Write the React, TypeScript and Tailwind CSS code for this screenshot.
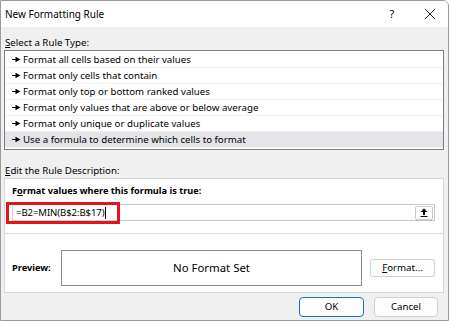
import React from "react";

const rules = [
  "Format all cells based on their values",
  "Format only cells that contain",
  "Format only top or bottom ranked values",
  "Format only values that are above or below average",
  "Format only unique or duplicate values",
  "Use a formula to determine which cells to format",
];

const Pointer = () => (
  <svg width="9" height="7" viewBox="0 0 9 7" className="shrink-0">
    <path d="M0 3.5h4" stroke="#000" strokeWidth="1.2" />
    <path d="M3.5 0.8L8.5 3.5L3.5 6.2Z" fill="#000" />
  </svg>
);

export default function App() {
  return (
    <div className="w-[450px] h-[321px] bg-white" style={{ fontFamily: '"Noto Sans", "Open Sans", sans-serif' }}>
      <div className="w-[449px] h-[321px] flex flex-col bg-[#f0f0f0] border border-[#9a9a9a] rounded-tr-[6px] text-[9.7px] text-black leading-[14px] overflow-hidden">
        {/* Title bar */}
        <div className="h-[26px] shrink-0 bg-white flex items-center pl-[4px] text-[10px]">
          <span className="flex-1">New Formatting Rule</span>
          <span className="w-[20px] text-center text-[11px] mr-[22px]">?</span>
          <svg width="12" height="12" viewBox="0 0 12 12" className="mr-[12px]">
            <path d="M1 1L11 11M11 1L1 11" stroke="#222" strokeWidth="1" />
          </svg>
        </div>

        <div className="flex flex-col px-[3px] pt-[9px]">
          <div className="pl-[1px]">
            <span className="underline">S</span>elect a Rule Type:
          </div>
          <div className="w-[440px] h-[100px] bg-white border border-[#7d7d7d] py-[1px]">
            {rules.map((r, i) => (
              <div
                key={r}
                className={`h-[16px] flex items-center gap-[2px] pl-[7px] border-b border-[#f2f2f2] ${i === 5 ? "bg-[#e4e4e8]" : ""}`}
              >
                <Pointer />
                <span>{r}</span>
              </div>
            ))}
          </div>

          <div className="mt-[14px] pl-[1px]">
            <span className="underline">E</span>dit the Rule Description:
          </div>
          <div className="w-[440px] h-[115px] bg-white border border-[#d5d5d5] flex flex-col">
            <div className="relative flex flex-col px-[7px] pt-[5px] pb-[12px] border-b border-[#dcdcdc]">
              <div className="font-bold text-[9.2px]">
                F<span className="underline">o</span>rmat values where this formula is true:
              </div>
              <div className="mt-[6px] w-[423px] h-[17px] border border-[#c8c8c8] flex items-center justify-between">
                <span className="pl-[3px] text-[9.6px] tracking-[-0.1px]">
                  =B2=MIN(B$2:B$17)<span className="inline-block w-[1px] h-[12px] bg-black align-middle ml-[1px]" />
                </span>
                <div className="w-[18px] h-[14px] mr-[1px] border border-[#c8c8c8] rounded-[2px] flex items-center justify-center bg-white">
                  <svg width="8" height="9" viewBox="0 0 8 9">
                    <path d="M4 0.5L7.5 4H5V7H3V4H0.5Z" fill="#000" />
                    <path d="M0.5 8.5H7.5" stroke="#000" strokeWidth="1" />
                  </svg>
                </div>
              </div>
              <div className="absolute left-[1px] top-[23px] w-[114px] h-[22px] border-[3px] border-[#e3151c]" />
            </div>
            <div className="flex items-center px-[7px] pt-[16px]">
              <span className="font-bold text-[9.2px] w-[49px]">Preview:</span>
              <div className="w-[301px] h-[36px] border border-[#8e8e8e] flex items-center justify-center text-[11.4px]">
                No Format Set
              </div>
              <div className="ml-[8px] w-[65px] h-[18px] border border-[#d0d0d0] rounded-[3px] bg-[#fdfdfd] flex items-center justify-center">
                <span><span className="underline">F</span>ormat...</span>
              </div>
            </div>
          </div>

          <div className="flex justify-end gap-[10px] mt-[4px] pr-[7px]">
            <div className="w-[65px] h-[20px] border border-[#1f6fc0] rounded-[4px] bg-[#fdfdfd] flex items-center justify-center">
              OK
            </div>
            <div className="w-[64px] h-[20px] border border-[#d0d0d0] rounded-[4px] bg-[#fdfdfd] flex items-center justify-center">
              Cancel
            </div>
          </div>
        </div>
      </div>
    </div>
  );
}
